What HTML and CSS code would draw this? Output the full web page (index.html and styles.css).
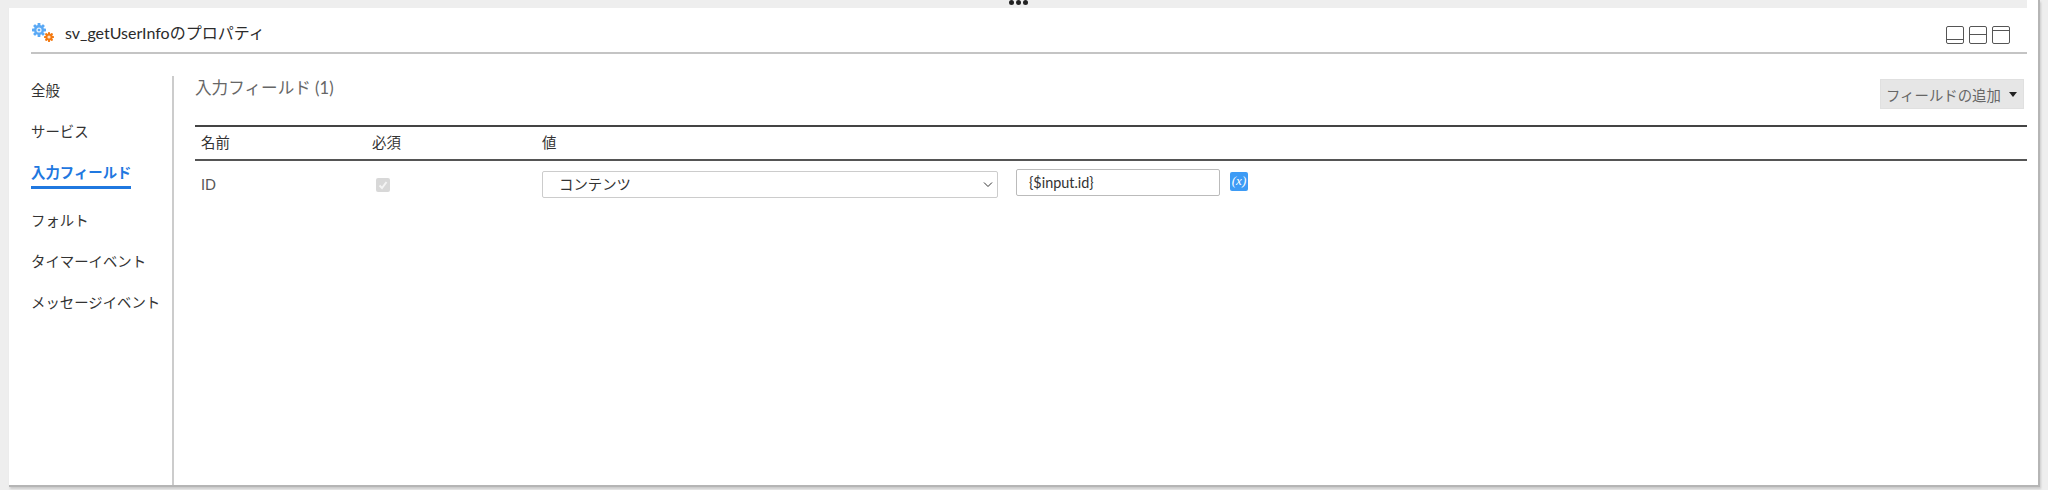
FILE: index.html
```html
<!DOCTYPE html>
<html lang="ja">
<head>
  <meta charset="UTF-8">
  <title>sv_getUserInfoのプロパティ</title>
  <link rel="stylesheet" href="styles.css">
</head>
<body>
  <div class="panel">
    <!-- ドラッグ用のバー -->
    <div class="top-strip">
      <span class="dots"><i></i><i></i><i></i></span>
    </div>

    <div class="inner">
      <!-- タイトル -->
      <header class="title-row">
        <svg class="gears" width="24" height="20" viewBox="0 0 24 20">
          <g fill="#5aa9f5">
            <circle cx="8" cy="7" r="4.9"/>
            <rect x="6.6" y="0" width="2.8" height="14" rx="0.6"/>
            <rect x="1" y="5.6" width="14" height="2.8" rx="0.6"/>
            <rect x="6.6" y="0" width="2.8" height="14" rx="0.6" transform="rotate(45 8 7)"/>
            <rect x="6.6" y="0" width="2.8" height="14" rx="0.6" transform="rotate(-45 8 7)"/>
          </g>
          <circle cx="8" cy="7" r="2.6" fill="#e4f0fc"/>
          <circle cx="8" cy="7" r="1.3" fill="#5aa9f5"/>
          <g fill="#f47a12">
            <circle cx="18" cy="14" r="3.6"/>
            <rect x="17" y="9" width="2" height="10" rx="0.4"/>
            <rect x="13" y="13" width="10" height="2" rx="0.4"/>
            <rect x="17" y="9" width="2" height="10" rx="0.4" transform="rotate(45 18 14)"/>
            <rect x="17" y="9" width="2" height="10" rx="0.4" transform="rotate(-45 18 14)"/>
          </g>
          <circle cx="18" cy="14" r="1.6" fill="#fde3c8"/>
        </svg>
        <h1 class="title">sv_getUserInfoのプロパティ</h1>
        <div class="layout-btns">
          <svg width="18" height="18" viewBox="0 0 18 18"><rect x="0.5" y="0.5" width="17" height="17" rx="1.5"/><path d="M1 13.5h16"/></svg>
          <svg width="18" height="18" viewBox="0 0 18 18"><rect x="0.5" y="0.5" width="17" height="17" rx="1.5"/><path d="M1 8.5h16"/></svg>
          <svg width="18" height="18" viewBox="0 0 18 18"><rect x="0.5" y="0.5" width="17" height="17" rx="1.5"/><path d="M1 4.5h16"/></svg>
        </div>
      </header>

      <div class="body-row">
        <!-- 左メニュー -->
        <nav class="side-nav">
          <a class="nav-item">全般</a>
          <a class="nav-item">サービス</a>
          <a class="nav-item active">入力フィールド</a>
          <a class="nav-item">フォルト</a>
          <a class="nav-item">タイマーイベント</a>
          <a class="nav-item">メッセージイベント</a>
        </nav>

        <main class="content">
          <div class="content-head">
            <h2 class="section-title">入力フィールド (1)</h2>
            <button class="add-btn">フィールドの追加<span class="caret"></span></button>
          </div>

          <div class="table-head">
            <div class="col-name">名前</div>
            <div class="col-req">必須</div>
            <div class="col-val">値</div>
          </div>

          <div class="table-row">
            <div class="col-name">ID</div>
            <div class="col-req">
              <span class="check">
                <svg width="14" height="14" viewBox="0 0 14 14"><path d="M3.5 7.5l2.5 2.5 4.5-6" fill="none" stroke="#f4f4f4" stroke-width="2"/></svg>
              </span>
            </div>
            <div class="col-val">
              <div class="select-box">
                <span class="select-text">コンテンツ</span>
                <svg width="10" height="7" viewBox="0 0 10 7"><path d="M1 1.5l4 4 4-4" fill="none" stroke="#333" stroke-width="1"/></svg>
              </div>
              <div class="text-box">{$input.id}</div>
              <span class="var-btn">(x)</span>
            </div>
          </div>
        </main>
      </div>
    </div>
  </div>
</body>
</html>
```

FILE: styles.css
```css
body {
  margin: 0;
  height: 490px;
  overflow: hidden;
  background-color: #eeeeee;
  font-family: "Lato", "Noto Sans CJK JP", sans-serif;
  font-size: 14.4px;
  color: #333;
}

/* 白いパネル全体 */
.panel {
  width: 2029px;
  height: 485px;
  margin-left: 9px;
  background-color: #ffffff;
  border-right: 2px solid #b5b5b5;
  border-bottom: 2px solid #b5b5b5;
  box-shadow: 1px 2px 2px rgba(0, 0, 0, 0.15);
  display: flex;
  flex-direction: column;
}

.top-strip {
  width: 2018px;
  height: 8px;
  flex: none;
  margin-left: -9px;
  padding-left: 9px;
  background-color: #eeeeee;
  display: flex;
  justify-content: center;
}

.dots {
  display: flex;
  gap: 2px;
  height: 5px;
}

.dots i {
  width: 5px;
  height: 5px;
  border-radius: 50%;
  background-color: #222;
}

.inner {
  flex: 1;
  min-height: 0;
  padding: 0 11px 0 22px;
  display: flex;
  flex-direction: column;
}

/* タイトル行 */
.title-row {
  height: 44px;
  flex: none;
  border-bottom: 2px solid #c4c4c4;
  display: flex;
  align-items: center;
}

.gears {
  margin: 5px 10px 0 0;
}

.title {
  margin: 4px 0 0;
  font-size: 16px;
  font-weight: 400;
  color: #2b2b2b;
}

.layout-btns {
  margin-left: auto;
  margin-right: 17px;
  display: flex;
  gap: 5px;
  padding-top: 9px;
}

.layout-btns svg {
  fill: none;
  stroke: #555;
}

/* 本文 */
.body-row {
  flex: 1;
  min-height: 0;
  padding-top: 22px;
  display: flex;
}

.side-nav {
  width: 141px;
  flex: none;
  border-right: 2px solid #cccccc;
  display: flex;
  flex-direction: column;
  align-items: flex-start;
}

.nav-item {
  height: 41px;
  padding-top: 2px;
  box-sizing: border-box;
  line-height: 26px;
  color: #333;
  flex: none;
}

.nav-item.active {
  height: 48px;
  color: #1f78e0;
  font-weight: 700;
}

.nav-item.active::after {
  content: "";
  display: block;
  height: 3px;
  background-color: #1f78e0;
}

.content {
  flex: 1;
  padding-left: 21px;
}

.content-head {
  height: 49px;
  display: flex;
  justify-content: space-between;
  align-items: flex-start;
}

.section-title {
  margin: 0;
  padding-top: 1px;
  font-size: 16.6px;
  line-height: 22px;
  font-weight: 400;
  color: #666;
}

.add-btn {
  margin: 3px 3px 0 0;
  width: 144px;
  height: 30px;
  padding: 0 6px 0 5px;
  border: 1px solid #e0e0e0;
  background-color: #e6e6e6;
  font-family: inherit;
  font-size: 14.4px;
  color: #666;
  display: flex;
  align-items: center;
  justify-content: space-between;
}

.caret {
  width: 0;
  height: 0;
  border-left: 4px solid transparent;
  border-right: 4px solid transparent;
  border-top: 5px solid #222;
}

.table-head {
  height: 29px;
  padding-bottom: 3px;
  border-top: 2px solid #444;
  border-bottom: 2px solid #555;
  display: flex;
  align-items: center;
  color: #333;
}

.table-row {
  height: 50px;
  display: flex;
  align-items: flex-start;
}

.col-name {
  width: 177px;
  padding-left: 6px;
  box-sizing: border-box;
  flex: none;
}

.col-req {
  width: 170px;
  flex: none;
}

.col-val {
  flex: 1;
  display: flex;
  align-items: flex-start;
}

.table-row .col-name {
  padding-top: 14px;
  line-height: 20px;
  color: #555;
}

.table-row .col-req {
  padding: 17px 0 0 4px;
  box-sizing: border-box;
}

.check {
  display: block;
  width: 14px;
  height: 14px;
  border-radius: 2px;
  background-color: #d8d8d8;
}

.check svg {
  display: block;
}

.select-box {
  width: 456px;
  height: 27px;
  margin-top: 10px;
  box-sizing: border-box;
  padding: 0 4px 0 16px;
  border: 1px solid #cccccc;
  border-radius: 2px;
  display: flex;
  align-items: center;
  justify-content: space-between;
  color: #333;
}

.select-text {
  margin-bottom: 2px;
}

.text-box {
  width: 204px;
  height: 27px;
  margin: 8px 0 0 18px;
  box-sizing: border-box;
  padding-left: 12px;
  border: 1px solid #bbbbbb;
  border-radius: 2px;
  line-height: 25px;
  color: #333;
}

.var-btn {
  width: 18px;
  height: 19px;
  margin: 11px 0 0 10px;
  border-radius: 2px;
  background-color: #3d9bf5;
  color: #ffffff;
  font-family: "Liberation Serif", serif;
  font-style: italic;
  font-size: 13px;
  line-height: 17px;
  text-align: center;
}
```
